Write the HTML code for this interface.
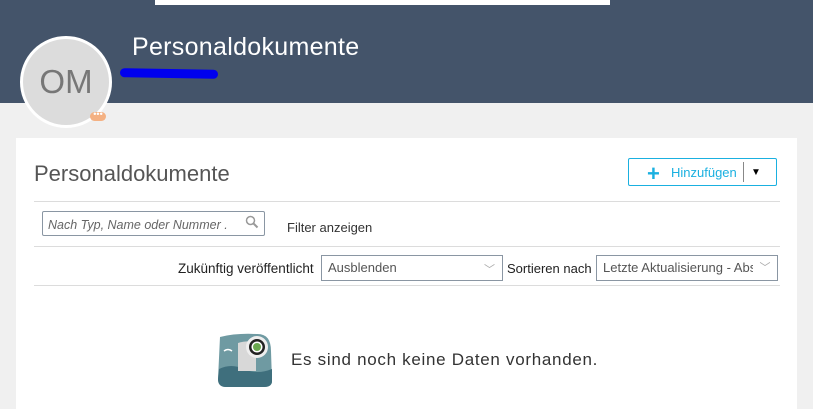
<!DOCTYPE html>
<html><head><meta charset="utf-8"><style>
body{margin:0;width:813px;height:409px;background:#f0f0f0;font-family:"Liberation Sans",sans-serif;position:relative;overflow:hidden}
.a{position:absolute}
.hdr{left:0;top:0;width:813px;height:103px;background:#44546a}
.line{height:1px;background:#dcdcdc;left:34px;width:746px}
.sel{border:1px solid #8a96a3;background:#fff;height:26px;box-sizing:border-box;font-size:13px;color:#555;padding:4px 6px;white-space:nowrap;overflow:hidden}
</style></head><body>
<div class="a hdr"></div>
<div class="a" style="left:155px;top:0;width:455px;height:5px;background:#fff"></div>
<div class="a" style="left:132px;top:33px;font-size:25px;color:#fff;letter-spacing:0.3px">Personaldokumente</div>
<div class="a" style="left:120px;top:69px;width:98px;height:9px;background:#0000ee;border-radius:5px;transform:rotate(1deg)"></div>
<div class="a" style="left:20px;top:36px;width:86px;height:86px;border-radius:50%;background:#dcdcdc;border:3px solid #fff;text-align:center;line-height:86px;font-size:33px;color:#777">OM</div>
<div class="a" style="left:90px;top:112px;width:16px;height:9px;border-radius:5px;background:#f4b183;color:#fff;font-size:9px;line-height:5px;text-align:center">•••</div>
<div class="a" style="left:16px;top:138px;width:781px;height:271px;background:#fff"></div>
<div class="a" style="left:34px;top:161px;font-size:22px;color:#555">Personaldokumente</div>
<div class="a" style="left:628px;top:158px;width:149px;height:28px;box-sizing:border-box;border:1px solid #1ab0e0;border-radius:2px"></div>
<div class="a" style="left:647px;top:161px;font-size:22px;color:#1ab0e0;font-weight:bold">+</div>
<div class="a" style="left:671px;top:165px;font-size:13px;color:#1ab0e0">Hinzufügen</div>
<div class="a" style="left:743px;top:162px;width:1px;height:20px;background:#888"></div>
<div class="a" style="left:751px;top:167px;font-size:10px;color:#000">▼</div>
<div class="a line" style="top:201px"></div>
<div class="a line" style="top:246px"></div>
<div class="a line" style="top:285px"></div>
<div class="a" style="left:42px;top:211px;width:223px;height:25px;box-sizing:border-box;border:1px solid #8a96a3;border-radius:2px"></div>
<div class="a" style="left:48px;top:218px;font-size:12.5px;font-style:italic;color:#666">Nach Typ, Name oder Nummer .</div>
<svg class="a" style="left:245px;top:215px" width="14" height="14"><circle cx="5.5" cy="5.5" r="4" fill="none" stroke="#999" stroke-width="1.5"/><path d="M8.5 8.5l4 4" stroke="#999" stroke-width="2"/></svg>
<div class="a" style="left:287px;top:220px;font-size:13px;color:#333">Filter anzeigen</div>
<div class="a" style="left:178px;top:261px;font-size:13.5px;color:#222">Zukünftig veröffentlicht</div>
<div class="a sel" style="left:321px;top:255px;width:182px">Ausblenden</div>
<div class="a" style="left:484px;top:261px;font-size:11px;color:#aaa">﹀</div>
<div class="a" style="left:507px;top:261px;font-size:13px;color:#222">Sortieren nach</div>
<div class="a sel" style="left:596px;top:255px;width:182px">Letzte Aktualisierung - Abs</div>
<div class="a" style="left:753px;top:255px;width:25px;height:26px;background:#fff;border:1px solid #8a96a3;border-left:none;box-sizing:border-box;font-size:11px;color:#aaa;text-align:center;line-height:24px">﹀</div>
<svg class="a" style="left:216px;top:331px" width="58" height="58">
<path d="M4 6 Q20 2 40 3 Q55 2 55 20 L56 50 Q56 56 48 56 L10 56 Q2 56 2 48 Z" fill="#6f9aa2"/>
<path d="M3 38 Q15 32 28 38 T56 38 L56 50 Q56 56 48 56 L10 56 Q2 56 2 48Z" fill="#3f6f7d"/>
<path d="M22 12 Q36 8 40 14 L40 40 L22 40Z" fill="#d8d8d8"/>
<circle cx="41" cy="16" r="11" fill="#eee"/><circle cx="41" cy="16" r="8" fill="#222"/><circle cx="41" cy="16" r="5.5" fill="#fff"/><circle cx="41" cy="16" r="4" fill="#6aa84f"/>
<path d="M8 20 q4-3 8 0" stroke="#fff" stroke-width="1.5" fill="none"/>
</svg>
<div class="a" style="left:291px;top:350px;font-size:17px;color:#333;letter-spacing:0.7px">Es sind noch keine Daten vorhanden.</div>
</body></html>
